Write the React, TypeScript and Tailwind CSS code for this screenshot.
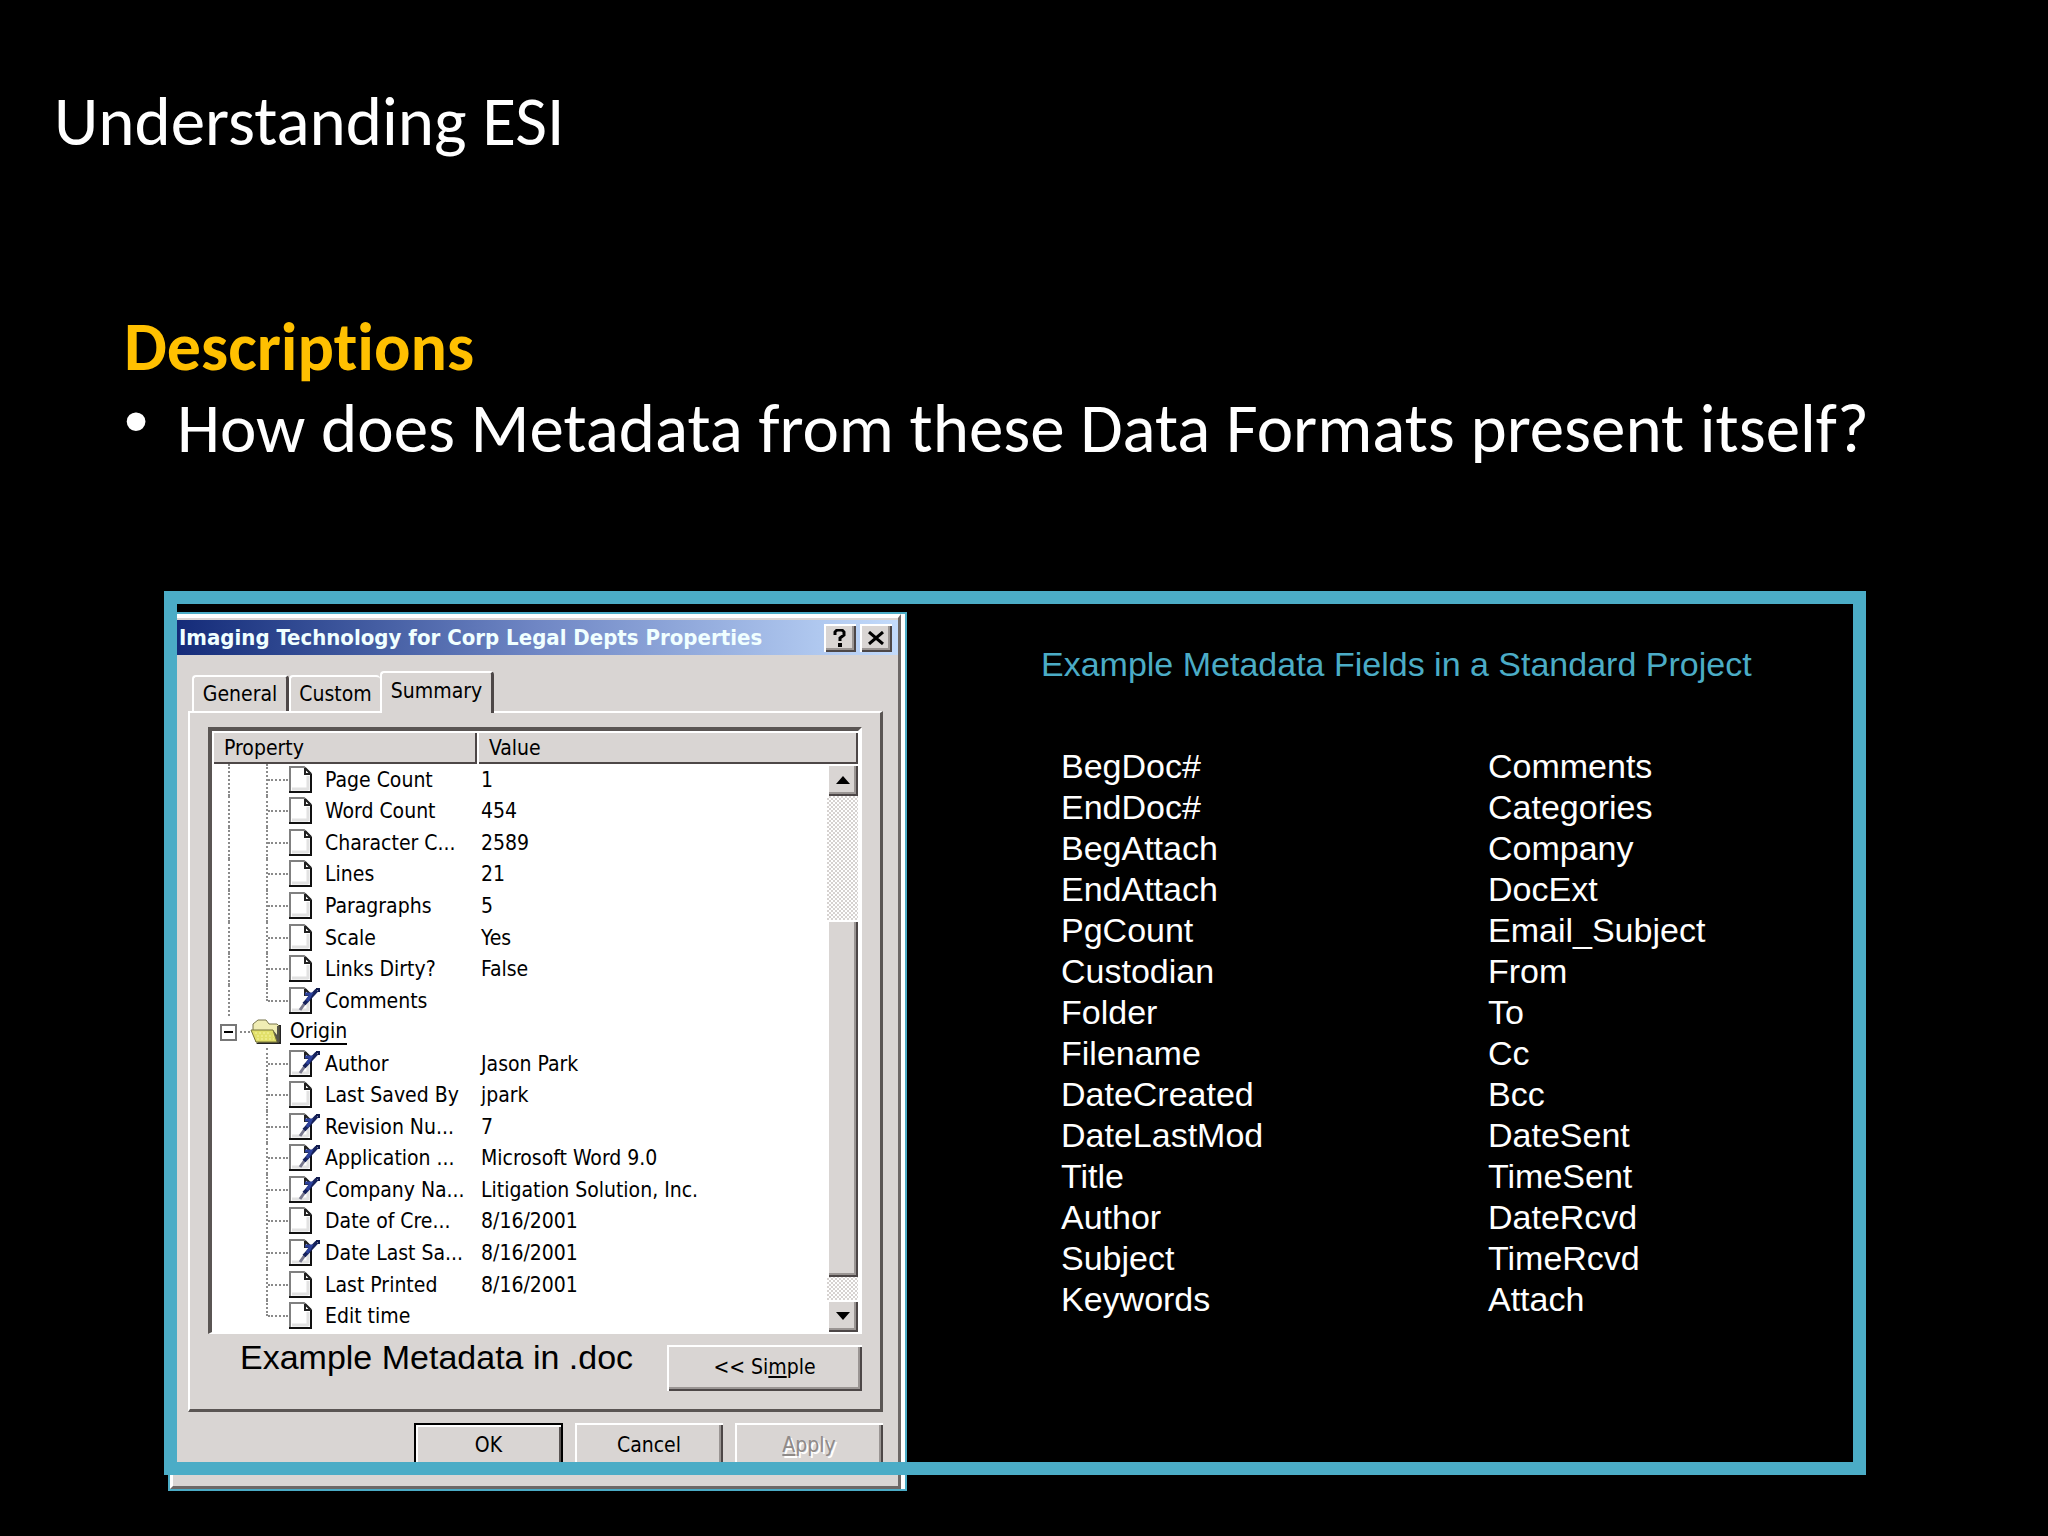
import clsx from 'clsx';

type RowIcon = 'page' | 'pen';

interface PropertyRow {
  name: string;
  value?: string;
  icon: RowIcon;
}

const STATISTICS_ROWS: PropertyRow[] = [
  { name: 'Page Count', value: '1', icon: 'page' },
  { name: 'Word Count', value: '454', icon: 'page' },
  { name: 'Character C...', value: '2589', icon: 'page' },
  { name: 'Lines', value: '21', icon: 'page' },
  { name: 'Paragraphs', value: '5', icon: 'page' },
  { name: 'Scale', value: 'Yes', icon: 'page' },
  { name: 'Links Dirty?', value: 'False', icon: 'page' },
  { name: 'Comments', icon: 'pen' },
];

const ORIGIN_ROWS: PropertyRow[] = [
  { name: 'Author', value: 'Jason Park', icon: 'pen' },
  { name: 'Last Saved By', value: 'jpark', icon: 'page' },
  { name: 'Revision Nu...', value: '7', icon: 'pen' },
  { name: 'Application ...', value: 'Microsoft Word 9.0', icon: 'pen' },
  { name: 'Company Na...', value: 'Litigation Solution, Inc.', icon: 'pen' },
  { name: 'Date of Cre...', value: '8/16/2001', icon: 'page' },
  { name: 'Date Last Sa...', value: '8/16/2001', icon: 'pen' },
  { name: 'Last Printed', value: '8/16/2001', icon: 'page' },
  { name: 'Edit time', icon: 'page' },
];

const LEFT_FIELDS = [
  'BegDoc#', 'EndDoc#', 'BegAttach', 'EndAttach', 'PgCount', 'Custodian', 'Folder',
  'Filename', 'DateCreated', 'DateLastMod', 'Title', 'Author', 'Subject', 'Keywords',
];

const RIGHT_FIELDS = [
  'Comments', 'Categories', 'Company', 'DocExt', 'Email_Subject', 'From', 'To',
  'Cc', 'Bcc', 'DateSent', 'TimeSent', 'DateRcvd', 'TimeRcvd', 'Attach',
];

const RAISED =
  'bg-[#d9d5d3] shadow-[inset_2px_2px_0_#fff,inset_-2px_-2px_0_#4d4747,inset_-4px_-4px_0_#9a9593]';

function PageIcon({ pen }: { pen: boolean }) {
  return (
    <svg width="32" height="28" viewBox="0 0 32 28" aria-hidden="true" className="shrink-0">
      <path d="M1 1h14l7 7v18H1z" fill="#fff" stroke="#808080" strokeWidth="2" />
      <path d="M19 24V10M3 23h16" stroke="#e2e2e2" strokeWidth="3" />
      <path d="M0 26h22V8" fill="none" stroke="#111" strokeWidth="2" />
      <path d="M16 2v6h6" fill="none" stroke="#222" strokeWidth="2" />
      <path d="M16 2l6 6" stroke="#222" strokeWidth="2" />
      {pen && (
        <>
          <path d="M11 23l5-7" stroke="#77778c" strokeWidth="3" />
          <path d="M15 17L28 3" stroke="#16225c" strokeWidth="4" />
          <path d="M16 7h6l-4 7" fill="none" stroke="#2c419c" strokeWidth="3" />
          <path d="M27 2h3v3" stroke="#101a4c" strokeWidth="2" fill="none" />
        </>
      )}
    </svg>
  );
}

function FolderIcon() {
  return (
    <svg width="32" height="28" viewBox="0 0 32 28" aria-hidden="true" className="shrink-0">
      <path d="M6 26h25V7h-2z" fill="#222" />
      <path d="M3 12V6l5-4h8l3 4h8l2 2v16H6z" fill="#f0edb4" stroke="#77754a" strokeWidth="1" />
      <path d="M23 12l4 5V8h2v16h-4z" fill="#55534a" />
      <path d="M1 12h22l4 12H6z" fill="#e2e06a" stroke="#77753a" strokeWidth="1" />
      <path d="M5 15h16M7 18h17M7 21h17" stroke="#f6f4a2" strokeWidth="1" strokeDasharray="2 2" />
    </svg>
  );
}

function TreeRow({ row, rail, last }: { row: PropertyRow; rail: boolean; last: boolean }) {
  return (
    <tr className="h-[31px]">
      <td className="h-[31px] p-0">
        <div className="flex h-full items-center">
          <span
            className={clsx(
              'ml-4 w-[38px] self-stretch border-l-2',
              rail ? 'border-dotted border-[#8a8a8a]' : 'border-transparent',
            )}
          />
          <span className={clsx('self-start border-l-2 border-dotted border-[#8a8a8a]', last ? 'h-1/2' : 'h-full')} />
          <span className="mr-px w-5 border-t-2 border-dotted border-[#8a8a8a]" />
          <PageIcon pen={row.icon === 'pen'} />
          <span className="pl-1 whitespace-nowrap">{row.name}</span>
        </div>
      </td>
      <td className="p-0 pl-1 whitespace-nowrap">{row.value}</td>
    </tr>
  );
}

function ScrollBar() {
  return (
    <div className="absolute top-[33px] right-0 bottom-0 flex w-[31px] flex-col bg-[repeating-conic-gradient(#d6d2d0_0%_25%,#ffffff_0%_50%)] bg-size-[4px_4px]">
      <button type="button" aria-label="Scroll up" className={clsx('flex h-8 items-center justify-center', RAISED)}>
        <svg width="14" height="8" viewBox="0 0 14 8" aria-hidden="true">
          <path d="M7 0l7 8H0z" fill="#000" />
        </svg>
      </button>
      <div className="h-[124px]" />
      <div className={clsx('h-[357px]', RAISED)} />
      <div className="flex-1" />
      <button type="button" aria-label="Scroll down" className={clsx('flex h-8 items-center justify-center', RAISED)}>
        <svg width="14" height="8" viewBox="0 0 14 8" aria-hidden="true">
          <path d="M0 0h14L7 8z" fill="#000" />
        </svg>
      </button>
    </div>
  );
}

function PropertyList() {
  return (
    <div className="relative border-t-4 border-r-4 border-b-2 border-l-4 border-t-[#5a5553] border-r-white border-b-white border-l-[#5a5553] bg-white leading-[28px]">
      <table className="h-[601px] w-full table-fixed border-collapse text-left">
        <thead>
          <tr className="h-[33px] bg-[#d9d5d3]">
            <th
              scope="col"
              className="w-[265px] p-0 pl-3 font-normal shadow-[inset_2px_2px_0_#fff,inset_-2px_-2px_0_#4d4747]"
            >
              Property
            </th>
            <th scope="col" className="p-0 pl-3 font-normal shadow-[inset_2px_2px_0_#fff,inset_-2px_-2px_0_#4d4747]">
              Value
            </th>
          </tr>
        </thead>
        <tbody>
          {STATISTICS_ROWS.map((row, index) => (
            <TreeRow key={row.name} row={row} rail last={index === STATISTICS_ROWS.length - 1} />
          ))}
          <tr className="h-[31px]">
            <td className="h-[31px] p-0">
              <div className="flex items-center">
                <button
                  type="button"
                  aria-label="Collapse Origin"
                  className="ml-2 flex size-[17px] items-center justify-center border-2 border-[#777]"
                >
                  <span className="h-[2px] w-[9px] bg-black" />
                </button>
                <span className="ml-[3px] w-[10px] border-t-2 border-dotted border-[#8a8a8a]" />
                <FolderIcon />
                <span className="ml-2 border-b-2 border-black leading-[24px]">Origin</span>
              </div>
            </td>
            <td className="p-0" />
          </tr>
          {ORIGIN_ROWS.map((row, index) => (
            <TreeRow key={row.name} row={row} rail={false} last={index === ORIGIN_ROWS.length - 1} />
          ))}
        </tbody>
      </table>
      <ScrollBar />
    </div>
  );
}

function PropertiesDialog() {
  return (
    <div className="-mb-4 w-[739px] shrink-0 border-2 border-[#4bacc6] bg-white pr-1 font-['DejaVu_Sans_Condensed','DejaVu_Sans',sans-serif] text-[21px] text-black">
      <div className="border-t-4 border-r-3 border-b-3 border-l-3 border-t-white border-r-[#6d6866] border-b-[#6d6866] border-l-white bg-[#d9d5d3] pb-[17px]">
        <div className="mt-[2px] flex h-[35px] items-center gap-1 bg-linear-to-r from-[#142a78] via-[#6f86c4] to-[#c3dbfb] px-[6px]">
          <h2 className="flex-1 text-[22px] font-bold whitespace-nowrap text-[#f0ffff]">
            Imaging Technology for Corp Legal Depts Properties
          </h2>
          <button type="button" aria-label="Help" className={clsx('flex h-7 w-8 items-center justify-center', RAISED)}>
            <svg width="14" height="18" viewBox="0 0 14 18" aria-hidden="true">
              <path d="M2 6V3l2-2h5l2 2v3L7 9v3" fill="none" stroke="#000" strokeWidth="3" />
              <path d="M5 14h4v4H5z" />
            </svg>
          </button>
          <button type="button" aria-label="Close" className={clsx('flex h-7 w-8 items-center justify-center', RAISED)}>
            <svg width="16" height="14" viewBox="0 0 16 14" aria-hidden="true">
              <path d="M1 1l14 12M15 1L1 13" stroke="#000" strokeWidth="3" />
            </svg>
          </button>
        </div>

        <div className="px-[15px] pt-4">
          <div role="tablist" className="flex items-end pl-1">
            <button
              type="button"
              role="tab"
              aria-selected="false"
              className="h-9 w-[97px] rounded-t-sm border-t-2 border-r-3 border-l-2 border-t-white border-r-[#4d4747] border-l-white pt-[2px]"
            >
              General
            </button>
            <button
              type="button"
              role="tab"
              aria-selected="false"
              className="h-9 w-[91px] rounded-t-sm border-t-2 border-l-2 border-white pt-[2px]"
            >
              Custom
            </button>
            <button
              type="button"
              role="tab"
              aria-selected="true"
              className="-mb-[2px] h-[42px] w-[114px] rounded-t-sm border-t-2 border-r-3 border-l-2 border-t-white border-r-[#4d4747] border-l-white bg-[#d9d5d3] pb-[2px]"
            >
              Summary
            </button>
          </div>

          <div className="border-t-2 border-r-3 border-b-3 border-l-2 border-t-white border-r-[#5a5553] border-b-[#5a5553] border-l-white px-[18px] pt-[14px] pb-[18px]">
            <PropertyList />
            <div className="mt-[11px] flex items-start justify-between">
              <p className="pl-8 font-['Liberation_Sans',Arial,sans-serif] text-[34px] leading-[24px]">
                Example Metadata in .doc
              </p>
              <button type="button" className={clsx('h-[46px] w-[195px]', RAISED)}>
                &lt;&lt; Si<u>m</u>ple
              </button>
            </div>
          </div>

          <div className="mt-[11px] flex justify-end gap-3">
            <button
              type="button"
              className="h-[46px] w-[149px] border-2 border-black bg-[#d9d5d3] shadow-[inset_2px_2px_0_#fff,inset_-2px_-2px_0_#5a5553]"
            >
              OK
            </button>
            <button type="button" className={clsx('h-[46px] w-[148px]', RAISED)}>
              Cancel
            </button>
            <button
              type="button"
              disabled
              className={clsx('h-[46px] w-[148px] text-[#8f8a88] text-shadow-[2px_2px_0_#fff]', RAISED)}
            >
              <u>A</u>pply
            </button>
          </div>
        </div>
      </div>
    </div>
  );
}

function FieldColumn({ fields }: { fields: string[] }) {
  return (
    <ul>
      {fields.map((field) => (
        <li key={field}>{field}</li>
      ))}
    </ul>
  );
}

export default function App() {
  return (
    <main className="min-h-screen overflow-hidden bg-black font-[Carlito,Lato,sans-serif] text-white [font-variant-ligatures:none]">
      <h1 className="px-[54px] pt-[84px] text-[69px] leading-[76px]">Understanding ESI</h1>

      <div className="mt-[146px] px-[124px] leading-[82px]">
        <h2 className="text-[68px] font-bold text-[#ffc000]">Descriptions</h2>
        <ul className="text-[69px]">
          <li className="flex whitespace-nowrap">
            <span aria-hidden="true" className="w-[53px] shrink-0 font-['Liberation_Sans',sans-serif] leading-[66px]">
              •
            </span>
            How does Metadata from these Data Formats present itself?
          </li>
        </ul>
      </div>

      <section className="relative mt-[121px] mr-[182px] ml-[164px] flex pt-[21px] pl-1">
        <PropertiesDialog />

        <div className="flex-1 pt-8 pl-[134px] font-['Liberation_Sans',Arial,sans-serif] text-[34px] leading-[41px]">
          <h3 className="text-[#4bacc6]">Example Metadata Fields in a Standard Project</h3>
          <div className="mt-[61px] grid grid-cols-[427px_1fr] pl-5">
            <FieldColumn fields={LEFT_FIELDS} />
            <FieldColumn fields={RIGHT_FIELDS} />
          </div>
        </div>

        {/* frame laid over the dialog */}
        <div className="pointer-events-none absolute inset-0 border-[13px] border-[#4bacc6]" />
      </section>
    </main>
  );
}
